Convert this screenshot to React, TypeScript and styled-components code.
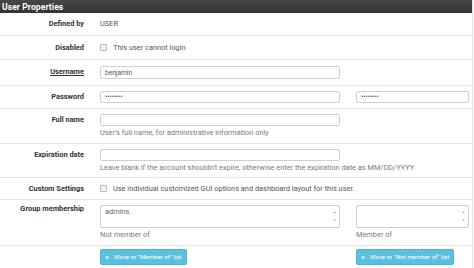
import styled, { createGlobalStyle } from "styled-components";

const GlobalStyle = createGlobalStyle`
  html, body {
    margin: 0;
    padding: 0;
    background: #fff;
  }
  body {
    font-family: Roboto, "Liberation Sans", sans-serif;
    font-size: 7.4px;
    color: #333;
  }
`;

const Panel = styled.div`
  width: 472px;
  height: 268px;
  overflow: hidden;
  border-right: 1px solid #e3e3e3;
`;

const Heading = styled.h2`
  margin: 0;
  height: 13px;
  padding: 0 2px;
  display: flex;
  align-items: center;
  background: linear-gradient(#474747, #343434);
  color: #fff;
  font-size: 8.5px;
  font-weight: 700;
  letter-spacing: 0.1px;
`;

const Row = styled.div<{ $pad?: string }>`
  display: grid;
  grid-template-columns: 84px 240px 113px;
  column-gap: 16px;
  align-items: start;
  padding: ${(p) => p.$pad ?? "5px"} 0;
  border-bottom: 1px solid #e6e6e6;
`;

const Label = styled.label<{ $top?: boolean; $underline?: boolean }>`
  text-align: right;
  font-weight: 700;
  color: #333;
  white-space: nowrap;
  line-height: ${(p) => (p.$top ? "10px" : "12px")};
  margin-top: ${(p) => (p.$top ? "-1px" : "0")};
  text-decoration: ${(p) => (p.$underline ? "underline" : "none")};
  text-underline-offset: 1px;
`;

const Value = styled.div`
  grid-column: span 2;
  line-height: 12px;
  color: #555;
`;

const Field = styled.div<{ $wide?: boolean }>`
  display: flex;
  flex-direction: column;
  gap: 2px;
  grid-column: ${(p) => (p.$wide ? "span 2" : "auto")};
`;

const Input = styled.input<{ $tall?: boolean; $narrow?: boolean }>`
  box-sizing: border-box;
  width: ${(p) => (p.$narrow ? "113px" : "240px")};
  height: ${(p) => (p.$tall ? "13px" : "12px")};
  border: 1px solid #cfcfcf;
  border-radius: 2px;
  padding: 0 4px;
  font-family: Roboto, "Liberation Sans", sans-serif;
  font-size: 6.6px;
  color: #555;
  background: #fff;
  outline: none;
`;

const Help = styled.div`
  white-space: nowrap;
  color: #7a7a7a;
  line-height: 10px;
`;

const CheckLine = styled.label`
  grid-column: span 2;
  display: flex;
  align-items: center;
  gap: 6px;
  line-height: 12px;
  color: #555;
  white-space: nowrap;
`;

const Box = styled.span`
  width: 5px;
  height: 5px;
  border: 1px solid #bdbdbd;
  border-radius: 1px;
  background: #f1f1f1;
`;

const Select = styled.div`
  box-sizing: border-box;
  position: relative;
  height: 23px;
  border: 1px solid #cfcfcf;
  border-radius: 2px;
  padding: 1px 4px;
  color: #666;
  line-height: 9px;
`;

const Arrow = styled.span<{ $down?: boolean }>`
  position: absolute;
  right: 3px;
  top: ${(p) => (p.$down ? "auto" : "2px")};
  bottom: ${(p) => (p.$down ? "2px" : "auto")};
  font-size: 3px;
  color: #888;
`;

const Button = styled.button`
  display: flex;
  align-items: center;
  gap: 5px;
  height: 16px;
  width: fit-content;
  padding: 0 4px;
  border: 1px solid #4ab6d6;
  border-radius: 2px;
  background: #5bc0de;
  color: #fff;
  font-family: Roboto, "Liberation Sans", sans-serif;
  font-size: 6.2px;
  white-space: nowrap;
`;

const Chevron = styled.span`
  font-weight: 700;
  font-size: 8px;
  line-height: 1;
`;

const Empty = styled.div``;

export default function App() {
  return (
    <>
      <GlobalStyle />
      <Panel>
        <Heading>User Properties</Heading>
        <Row>
          <Label>Defined by</Label>
          <Value>USER</Value>
        </Row>
        <Row $pad="5.5px">
          <Label>Disabled</Label>
          <CheckLine>
            <Box />
            This user cannot login
          </CheckLine>
        </Row>
        <Row $pad="6px">
          <Label $underline>Username</Label>
          <Input $tall defaultValue="benjamin" />
        </Row>
        <Row>
          <Label>Password</Label>
          <Input type="password" defaultValue="password" />
          <Input $narrow type="password" defaultValue="password" />
        </Row>
        <Row>
          <Label>Full name</Label>
          <Field $wide>
            <Input />
            <Help>User's full name, for administrative information only</Help>
          </Field>
        </Row>
        <Row $pad="4.5px">
          <Label>Expiration date</Label>
          <Field $wide>
            <Input />
            <Help>
              Leave blank if the account shouldn't expire, otherwise enter the
              expiration date as MM/DD/YYYY
            </Help>
          </Field>
        </Row>
        <Row $pad="4.5px">
          <Label>Custom Settings</Label>
          <CheckLine>
            <Box />
            Use individual customized GUI options and dashboard layout for this
            user.
          </CheckLine>
        </Row>
        <Row>
          <Label $top>Group membership</Label>
          <Field>
            <Select>
              admins
              <Arrow>▲</Arrow>
              <Arrow $down>▼</Arrow>
            </Select>
            <Help>Not member of</Help>
          </Field>
          <Field>
            <Select>
              <Arrow>▲</Arrow>
              <Arrow $down>▼</Arrow>
            </Select>
            <Help>Member of</Help>
          </Field>
        </Row>
        <Row $pad="3px">
          <Empty />
          <Button>
            <Chevron>»</Chevron>
            Move to "Member of" list
          </Button>
          <Button>
            <Chevron>«</Chevron>
            Move to "Not member of" list
          </Button>
        </Row>
      </Panel>
    </>
  );
}
